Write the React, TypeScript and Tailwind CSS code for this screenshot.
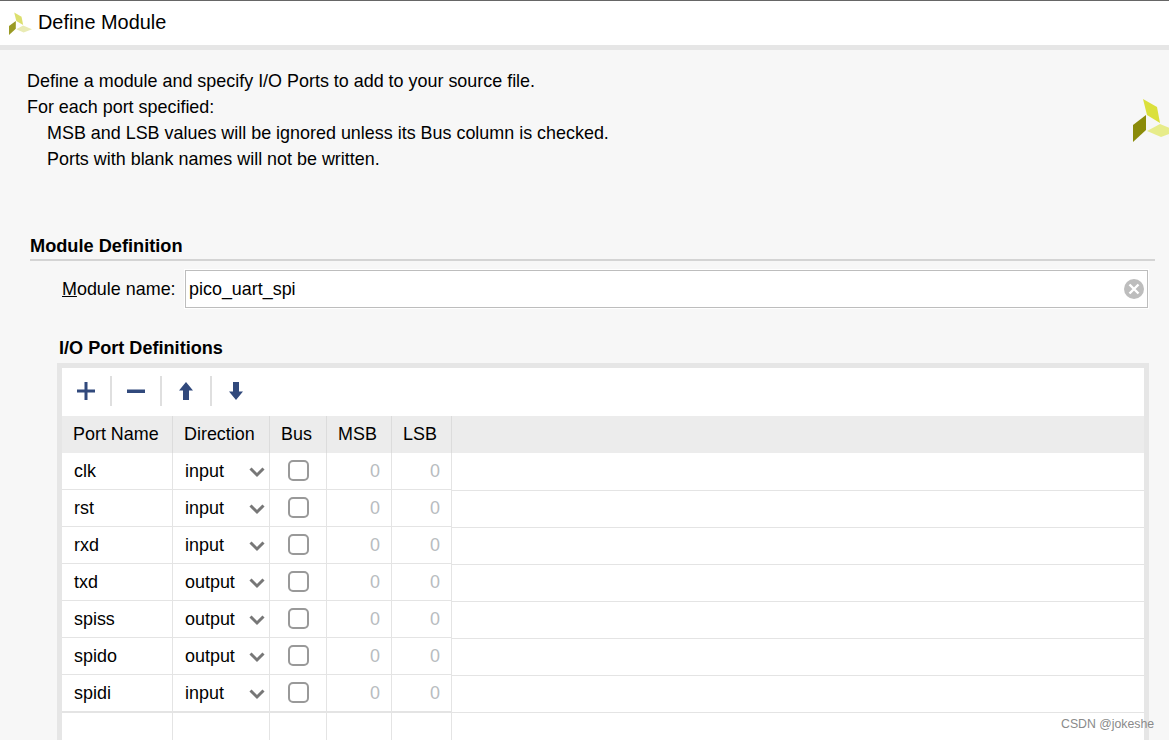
import React from "react";

function Logo({ className, pale }: { className: string; pale?: boolean }) {
  return (
    <svg viewBox="0 0 44 44" className={className}>
      <polygon points="10,1 24,9 27,25 14,17" fill={pale ? "#dcdf6e" : "#dbe03c"} />
      <polygon points="13,17 13,32 0,44 0,27" fill={pale ? "#9a9a24" : "#8b8b0a"} />
      <polygon points="27,26 44,33 28,39 14,33" fill={pale ? "#e9ebb4" : "#e7ec8a"} />
    </svg>
  );
}

const rows: [string, string][] = [
  ["clk", "input"],
  ["rst", "input"],
  ["rxd", "input"],
  ["txd", "output"],
  ["spiss", "output"],
  ["spido", "output"],
  ["spidi", "input"],
];

function Sep() {
  return <div className="w-[2px] h-[30px] bg-[#dfdfdf]" />;
}

function Row({ name, dir, last }: { name: string; dir: string; last: boolean }) {
  const b = last ? "border-b-2 h-[38px]" : "border-b h-[37px]";
  return (
    <div className={`flex items-start ${last ? "h-[38px]" : "h-[37px]"}`}>
      <div className={`w-[111px] ${b} border-r border-[#e4e4e4] pl-[12px] flex items-center`}>{name}</div>
      <div className={`w-[97px] ${b} border-r border-[#e4e4e4] pl-[12px] pr-[4px] flex items-center justify-between`}>
        <span>{dir}</span>
        <svg viewBox="0 0 16 12" className="w-[16px] h-[12px] mt-[2px]">
          <path d="M1.5 2.5 L8 9 L14.5 2.5" fill="none" stroke="#777777" strokeWidth="3" />
        </svg>
      </div>
      <div className={`w-[57px] ${b} border-r border-[#e4e4e4] flex items-center pl-[18px]`}>
        <div className="w-[21px] h-[21px] mb-[1px] border-2 border-[#999999] rounded-[5px] bg-white" />
      </div>
      <div className={`w-[65px] ${b} border-r border-[#e4e4e4] text-right pr-[11px] flex items-center justify-end text-[#b8bcc0]`}>0</div>
      <div className={`w-[60px] ${b} border-r border-[#e4e4e4] text-right pr-[11px] flex items-center justify-end text-[#b8bcc0]`}>0</div>
      <div className="flex-1 h-[38px] border-b border-[#e4e4e4]" />
    </div>
  );
}

export default function App() {
  return (
    <div className="relative w-[1169px] h-[740px] overflow-hidden bg-[#f7f7f7] text-[17.93px] text-black font-['Liberation_Sans',Arial,sans-serif]">
      <div className="h-px bg-[#666666]" />
      <div className="h-[44px] bg-white flex items-center pl-[9px] gap-[6px]">
        <Logo pale className="w-[23px] h-[23px]" />
        <span className="text-[19.9px]">Define Module</span>
      </div>
      <div className="h-[5px] bg-[#e6e6e6]" />

      <div className="flex pl-[27px] pt-[18px] h-[122px]">
        <div className="leading-[26px]">
          <div>Define a module and specify I/O Ports to add to your source file.</div>
          <div>For each port specified:</div>
          <div className="ml-[20px]">MSB and LSB values will be ignored unless its Bus column is checked.</div>
          <div className="ml-[20px]">Ports with blank names will not be written.</div>
        </div>
        <Logo className="w-[44px] h-[44px] ml-auto mr-[-8px] mt-[30px] shrink-0" />
      </div>

      <div className="mt-[64px] ml-[30px] w-[1125px] h-[25px] border-b-2 border-[#d4d4d4] font-bold text-[18.2px] leading-[20px]">Module Definition</div>

      <div className="mt-[9px] flex items-center">
        <div className="ml-[62px] w-[123px]"><u>M</u>odule name:</div>
        <div className="w-[963px] h-[38px] border border-[#bdbdbd] shadow-[0_0_0_1px_#ffffff] bg-white pl-[3px] pr-[3px] flex items-center justify-between">
          <span>pico_uart_spi</span>
          <svg viewBox="0 0 20 20" className="w-[20px] h-[20px]">
            <circle cx="10" cy="10" r="10" fill="#bdbdbd" />
            <path d="M5.5 5.5 L14.5 14.5 M14.5 5.5 L5.5 14.5" stroke="#ffffff" strokeWidth="2.4" />
          </svg>
        </div>
      </div>

      <div className="mt-[30px] ml-[59px] font-bold text-[18.1px] leading-[20px]">I/O Port Definitions</div>

      <div className="mt-[5px] ml-[57px] w-[1092px] h-[400px] border-[5px] border-[#e6e6e6] bg-white">
        <div className="h-[46px] flex items-center pl-[14px]">
          <div className="w-[34px] flex items-center justify-start">
            <svg viewBox="0 0 20 20" className="w-[20px] h-[20px]"><path d="M8.5 1h3v7.5H19v3h-7.5V19h-3v-7.5H1v-3h7.5z" fill="#31497c" /></svg>
          </div>
          <Sep />
          <div className="w-[48px] flex items-center justify-center">
            <svg viewBox="0 0 20 20" className="w-[20px] h-[20px]"><rect x="1" y="8.5" width="18" height="3.5" fill="#31497c" /></svg>
          </div>
          <Sep />
          <div className="w-[48px] flex items-center justify-center">
            <svg viewBox="0 0 16 20" className="w-[16px] h-[20px]"><path d="M8 1 L15 9.5 H11 V19 H5 V9.5 H1 Z" fill="#31497c" /></svg>
          </div>
          <Sep />
          <div className="w-[48px] flex items-center justify-center">
            <svg viewBox="0 0 16 20" className="w-[16px] h-[20px]"><path d="M8 19 L15 10.5 H11 V1 H5 V10.5 H1 Z" fill="#31497c" /></svg>
          </div>
        </div>
        <div className="mt-[2px] h-[37px] bg-[#ececec] flex items-center">
          <div className="w-[111px] h-full border-r border-[#dcdcdc] pl-[11px] flex items-center">Port Name</div>
          <div className="w-[97px] h-full border-r border-[#dcdcdc] pl-[11px] flex items-center">Direction</div>
          <div className="w-[57px] h-full border-r border-[#dcdcdc] pl-[11px] flex items-center">Bus</div>
          <div className="w-[65px] h-full border-r border-[#dcdcdc] pl-[11px] flex items-center">MSB</div>
          <div className="w-[60px] h-full border-r border-[#dcdcdc] pl-[11px] flex items-center">LSB</div>
        </div>
        {rows.map(([n, d], i) => (
          <Row key={n} name={n} dir={d} last={i === rows.length - 1} />
        ))}
        <div className="flex h-[40px]">
          <div className="w-[111px] border-r border-[#e4e4e4]" />
          <div className="w-[97px] border-r border-[#e4e4e4]" />
          <div className="w-[57px] border-r border-[#e4e4e4]" />
          <div className="w-[65px] border-r border-[#e4e4e4]" />
          <div className="w-[60px] border-r border-[#e4e4e4]" />
        </div>
      </div>

      <div className="absolute left-[1061px] top-[717px] text-[12.3px] leading-[14px] text-[#8a8a8a]">CSDN @jokeshe</div>
    </div>
  );
}
